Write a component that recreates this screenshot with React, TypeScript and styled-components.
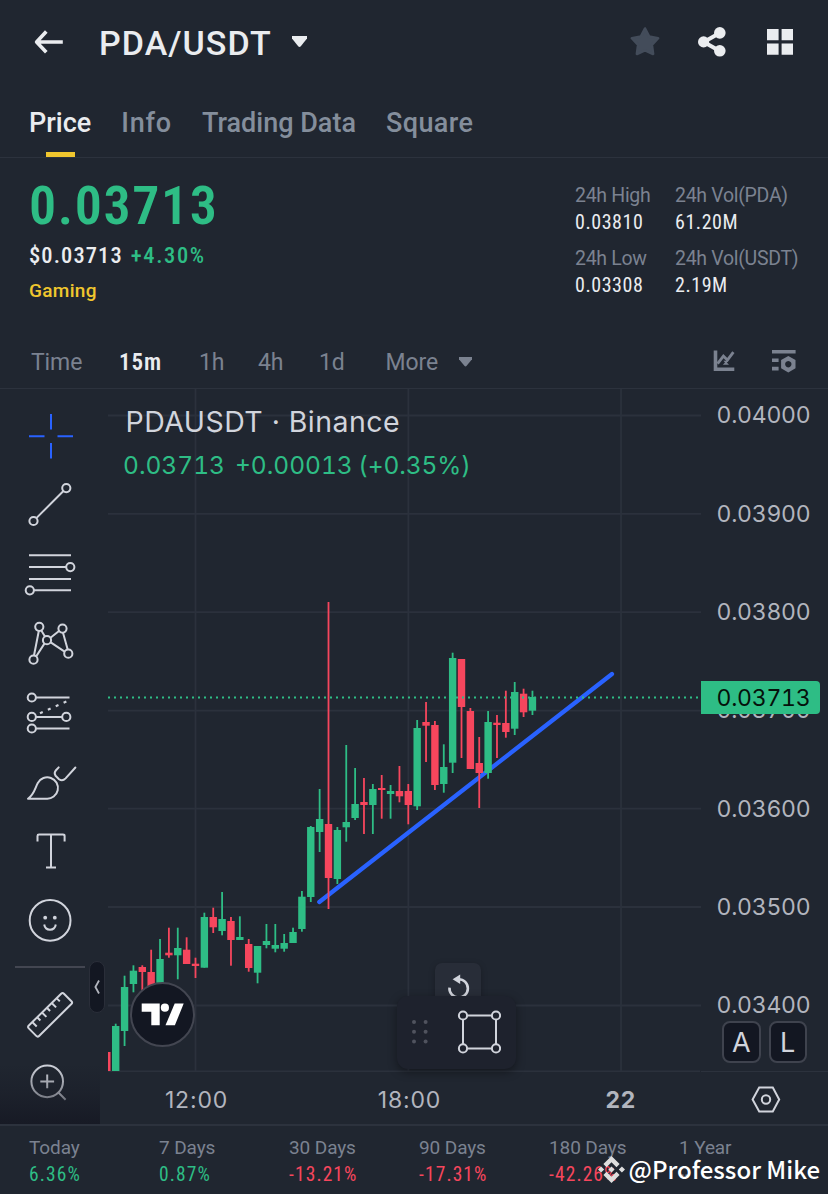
import React from 'react';
import styled, { createGlobalStyle, css } from 'styled-components';

const C = {
  bg: '#202630',
  line: '#2c323d',
  grid: '#2b313c',
  text: '#eaecef',
  muted: '#848e9c',
  dim: '#7b8290',
  axis: '#b2b5be',
  icon: '#d1d4dc',
  up: '#2ebd85',
  down: '#f6465d',
  blue: '#2962ff',
  yellow: '#f0c62e',
  panel: '#131722',
};

const Global = createGlobalStyle`
  * { box-sizing: border-box; }
  body { margin: 0; background: ${C.bg}; }
  svg { display: block; flex: none; }
`;

const Screen = styled.main`
  position: relative;
  width: 828px;
  height: 1194px;
  overflow: hidden;
  display: flex;
  flex-direction: column;
  background: ${C.bg};
  color: ${C.text};
  font-family: Roboto, 'Liberation Sans', sans-serif;
  white-space: nowrap;
`;

/* ---------- header ---------- */

const Header = styled.header`
  height: 87px;
  display: flex;
  align-items: center;
  padding: 0 34px 2px 33px;
  > svg {
    margin-bottom: 1.5px;
  }
`;

const PairTitle = styled.h1`
  margin: 0 20px 0 35px;
  font-size: 34px;
  line-height: 40px;
  font-weight: 500;
  letter-spacing: 1.05px;
`;

const HeaderActions = styled.div`
  display: flex;
  align-items: center;
  gap: 37px;
  margin: 0 0 1.5px auto;
  > :last-child {
    margin-left: 2px;
  }
`;

/* ---------- tabs ---------- */

const Tabs = styled.nav`
  height: 71px;
  display: flex;
  gap: 30px;
  padding-left: 29px;
  border-bottom: 1px solid ${C.line};
`;

const Tab = styled.span<{ $active?: boolean; $spacing?: number }>`
  position: relative;
  font-size: 27px;
  line-height: 72px;
  font-weight: 500;
  letter-spacing: ${(p) => p.$spacing ?? 0}px;
  color: ${(p) => (p.$active ? C.text : C.muted)};
  ${(p) =>
    p.$active &&
    css`
      &::after {
        content: '';
        position: absolute;
        left: 16.5px;
        bottom: 0;
        width: 29px;
        height: 5px;
        background: ${C.yellow};
      }
    `}
`;

/* ---------- price summary ---------- */

const Summary = styled.section`
  height: 178px;
  display: flex;
  justify-content: space-between;
  padding: 18px 0 0 29px;
`;

const PriceColumn = styled.div`
  display: flex;
  flex-direction: column;
`;

const LastPrice = styled.div`
  font-size: 54px;
  line-height: 59px;
  font-weight: 600;
  font-stretch: 75%;
  letter-spacing: 1.6px;
  color: ${C.up};
`;

const PriceSub = styled.div`
  display: flex;
  gap: 8px;
  margin-top: 5px;
  font-size: 22.5px;
  line-height: 30px;
  font-weight: 500;
  font-stretch: 75%;
  letter-spacing: 1.1px;
`;

const Gain = styled.span`
  letter-spacing: 1.6px;
  color: ${C.up};
`;

const Category = styled.div`
  margin-top: 8px;
  font-size: 19px;
  line-height: 26px;
  font-weight: 500;
  letter-spacing: 0.3px;
  color: ${C.yellow};
`;

const DayStats = styled.dl`
  width: 253px;
  margin: 5.6px 0 0;
  display: grid;
  grid-template-columns: 100px 1fr;
  align-content: start;
  row-gap: 9.4px;
  line-height: 27px;
`;

const DayStat = styled.div``;

const DayLabel = styled.dt`
  font-size: 19.5px;
  letter-spacing: -0.3px;
  color: ${C.dim};
`;

const DayValue = styled.dd`
  margin: 0;
  font-size: 20px;
  font-stretch: 75%;
  letter-spacing: 0.55px;
  color: ${C.text};
`;

/* ---------- interval bar ---------- */

const Intervals = styled.nav`
  height: 53px;
  display: flex;
  align-items: center;
  justify-content: space-between;
  padding: 0 31px 0 31px;
  border-bottom: 1px solid ${C.line};
`;

const IntervalList = styled.div`
  display: grid;
  grid-template-columns: 88px 80px 59px 61px 66.5px 73.5px auto;
  align-items: center;
`;

const Interval = styled.span<{ $active?: boolean }>`
  padding-top: 1px;
  font-size: 23px;
  line-height: 52px;
  letter-spacing: ${(p) => (p.$active ? 0.9 : -0.1)}px;
  font-weight: ${(p) => (p.$active ? 600 : 400)};
  font-stretch: ${(p) => (p.$active ? 75 : 100)}%;
  color: ${(p) => (p.$active ? C.text : C.dim)};
`;

const IntervalTools = styled.div`
  display: flex;
  align-items: center;
  gap: 36px;
  padding-bottom: 2px;
`;

/* ---------- chart ---------- */

const ChartArea = styled.section`
  height: 737px;
  display: grid;
  grid-template: 683px 52px / 100px 601px 127px;
  border-bottom: 2px solid ${C.line};
`;

const DrawingTools = styled.aside`
  position: relative;
  grid-row: 1 / 3;
  display: flex;
  flex-direction: column;
  align-items: center;
  padding-top: 12.5px;
  &::after {
    content: '';
    position: absolute;
    inset: auto 0 0 0;
    height: 60px;
    background: linear-gradient(rgba(23, 26, 37, 0), rgba(23, 26, 37, 0.4) 50%, #171a25);
  }
`;

const Tool = styled.div`
  height: 69.1px;
  display: flex;
  align-items: center;
`;

const ToolDivider = styled.hr`
  width: 70px;
  height: 2px;
  margin: 12px 0;
  border: 0;
  background: #434651;
`;

const CollapseHandle = styled.div`
  position: absolute;
  left: 89px;
  top: 572px;
  z-index: 2;
  width: 16px;
  height: 52px;
  display: grid;
  place-items: center;
  border: 1.5px solid #2a2e39;
  border-radius: 8px;
  background: ${C.panel};
`;

const Plot = styled.div`
  position: relative;
`;

const Legend = styled.div`
  position: absolute;
  left: 23px;
  top: 14px;
  font-family: Inter, sans-serif;
`;

const LegendTitle = styled.div`
  padding-left: 2.5px;
  font-size: 28.5px;
  line-height: 38px;
  letter-spacing: 0.45px;
  color: ${C.icon};
`;

const LegendValues = styled.div`
  display: flex;
  gap: 10px;
  margin-top: 5px;
  font-size: 24.5px;
  line-height: 38px;
  font-variant-numeric: tabular-nums;
  color: ${C.up};
  > :last-child {
    margin-left: -4.5px;
    letter-spacing: -0.1px;
  }
`;

const Badge = styled.div`
  position: absolute;
  left: 30px;
  top: 593px;
  width: 65px;
  height: 65px;
  display: grid;
  place-items: center;
  border: 2px solid #434651;
  border-radius: 50%;
  background: ${C.panel};
`;

const ResetButton = styled.div`
  position: absolute;
  left: 335px;
  top: 574px;
  width: 46px;
  height: 46px;
  padding: 10px 0 0 11px;
  border-radius: 7px;
  background: #282d38;
  box-shadow: 0 2px 6px rgba(0, 0, 0, 0.25);
`;

const FloatingBar = styled.div`
  position: absolute;
  left: 296.5px;
  top: 606.5px;
  width: 119.5px;
  height: 73.5px;
  display: flex;
  align-items: center;
  gap: 28px;
  padding-left: 14px;
  border-radius: 11px;
  background: #1e222d;
  box-shadow: 0 3px 10px rgba(0, 0, 0, 0.4);
`;

const PriceAxis = styled.div`
  position: relative;
  display: flex;
  flex-direction: column;
  gap: 71.35px;
  padding: 13.4px 0 0 15.5px;
  font-family: Inter, sans-serif;
  font-size: 23px;
  line-height: 27px;
  letter-spacing: -0.25px;
  font-variant-numeric: tabular-nums;
  color: ${C.axis};
  border-bottom: 1px solid ${C.line};
`;

const PriceTag = styled.div`
  position: absolute;
  left: 0;
  top: 292px;
  width: 119px;
  height: 33px;
  padding-left: 15.5px;
  border-radius: 0 4px 4px 0;
  line-height: 34px;
  background: ${C.up};
  color: #05110b;
`;

const ScaleButtons = styled.div`
  position: absolute;
  left: 21px;
  top: 631.5px;
  display: flex;
  gap: 8px;
`;

const ScaleButton = styled.span`
  width: 38.5px;
  height: 42.5px;
  border: 2px solid #3f434e;
  border-radius: 8px;
  background: ${C.panel};
  font-size: 27px;
  line-height: 39px;
  letter-spacing: 0;
  text-align: center;
  color: ${C.icon};
`;

const TimeAxis = styled.div`
  display: grid;
  grid-template-columns: 191px 235px 1fr;
  font-family: Inter, sans-serif;
  font-size: 23px;
  line-height: 56px;
  letter-spacing: 0.8px;
  color: ${C.axis};
`;

const TimeLabel = styled.span<{ $strong?: boolean }>`
  text-align: right;
  padding-right: ${(p) => (p.$strong ? 65 : 0)}px;
  font-weight: ${(p) => (p.$strong ? 700 : 400)};
  &:first-child {
    padding-right: 63px;
  }
  &:nth-child(2) {
    padding-right: 85px;
  }
`;

const AxisSettings = styled.div`
  display: grid;
  align-items: center;
  padding: 1px 0 0 50px;
`;

/* ---------- performance ---------- */

const Performance = styled.footer`
  flex: 1;
  display: grid;
  grid-template-columns: repeat(6, 130px);
  align-content: start;
  padding: 9px 0 0 29px;
  font-size: 19px;
  line-height: 26.5px;
`;

const Period = styled.div``;

const PeriodLabel = styled.div`
  letter-spacing: -0.1px;
  color: ${C.dim};
`;

const PeriodValue = styled.div<{ $tone: string }>`
  padding-top: 0.5px;
  font-size: 19.5px;
  font-stretch: 75%;
  letter-spacing: 1.1px;
  color: ${(p) => p.$tone};
`;

const Watermark = styled.div`
  position: absolute;
  right: 8px;
  top: 1152px;
  display: flex;
  align-items: center;
  gap: 4px;
  font-family: 'Noto Sans CJK SC', sans-serif;
  font-size: 24px;
  font-weight: 500;
  line-height: 34px;
  color: #fff;
`;

/* ---------- candles ---------- */

type Candle = [dir: 'u' | 'd', high: number, low: number, top: number, bottom: number];

const CANDLES: Candle[] = [
  ['d', 1052, 1071, 1052, 1071],
  ['u', 1023.7, 1071, 1026, 1071],
  ['u', 975.7, 1046, 987, 1031],
  ['u', 965.3, 992.3, 970.7, 984],
  ['d', 965.3, 992, 967, 972],
  ['d', 949.7, 990, 972, 990],
  ['u', 939, 990, 959, 988],
  ['d', 927.7, 957.7, 952.7, 955.3],
  ['u', 927.7, 979.3, 948, 955.3],
  ['d', 937.3, 964, 949.7, 964],
  ['d', 957.7, 978, 963.7, 966],
  ['u', 912.7, 967.7, 917, 967.7],
  ['d', 907.7, 933, 917, 927.3],
  ['u', 892, 935.3, 919, 931],
  ['d', 917, 965.7, 921, 940],
  ['u', 916.3, 940, 937, 940],
  ['d', 939, 971.7, 944, 968],
  ['u', 946, 983.3, 946, 972.7],
  ['u', 924, 948.3, 941, 945],
  ['u', 924, 952.3, 945, 948.7],
  ['u', 934, 951.7, 943, 948.7],
  ['u', 927.7, 943, 932, 943],
  ['u', 891, 931.7, 896.7, 929],
  ['u', 826, 902, 827, 897],
  ['u', 789, 852, 819, 832],
  ['d', 602, 909, 824, 878],
  ['u', 827, 884, 830, 879],
  ['u', 745, 841.7, 822, 827.3],
  ['u', 768, 820, 804, 818],
  ['d', 778, 834, 802, 805],
  ['u', 784, 834, 789, 805],
  ['d', 775, 818.7, 788, 790],
  ['u', 785, 818.7, 791, 794],
  ['d', 766, 802.3, 791, 796.3],
  ['d', 784, 824.3, 791, 805],
  ['u', 720, 810, 728, 806.3],
  ['d', 702, 762, 722, 725.7],
  ['d', 721, 790, 725, 785],
  ['u', 744.3, 792.7, 767, 784],
  ['u', 652.7, 773, 658, 762.7],
  ['d', 659, 758, 659, 707],
  ['d', 708, 769, 711, 769],
  ['d', 737, 808, 763, 773],
  ['u', 711, 778.7, 722, 773],
  ['d', 715, 758, 722.7, 725],
  ['d', 690.7, 737.7, 723, 732],
  ['u', 682, 735, 692, 728.7],
  ['d', 688.7, 717, 693.7, 712.3],
  ['u', 690.7, 715, 697, 710.7],
];

const STEP = 8.867;
const FIRST_X = 106.83;
const GRID_Y = [415.5, 513.9, 612.2, 710.6, 808.7, 907, 1005.5];
const GRID_X = [195.5, 408.4, 621];

function PriceChart() {
  return (
    <svg width="601" height="683" viewBox="100 389 601 683">
      <defs>
        <clipPath id="plot">
          <rect x="108" y="389" width="593" height="682" />
        </clipPath>
      </defs>
      <g stroke={C.grid} strokeWidth="1.8">
        {GRID_Y.map((y) => <path key={y} d={`M108 ${y}H701`} />)}
        {GRID_X.map((x) => <path key={x} d={`M${x} 389V1071`} />)}
        <path d="M108 1071.3H700" />
      </g>
      <path d="M319.3 902L612 674" stroke={C.blue} strokeWidth="4.3" strokeLinecap="round" />
      <g clipPath="url(#plot)">
        {CANDLES.map(([dir, high, low, top, bottom], i) => {
          const x = FIRST_X + i * STEP;
          const color = dir === 'u' ? C.up : C.down;
          return (
            <g key={i} fill={color}>
              <rect x={x - 0.9} y={high} width="1.8" height={low - high} />
              <rect x={x - 3.7} y={top} width="7.4" height={bottom - top} />
            </g>
          );
        })}
      </g>
      <path d="M108 697.4H701" stroke={C.up} strokeWidth="2" strokeDasharray="2 4" />
    </svg>
  );
}

/* ---------- drawing tool icons ---------- */

const Glyph = ({ cy, children, color = C.icon }: { cy: number; children: React.ReactNode; color?: string }) => (
  <svg width="64" height="64" viewBox={`18 ${cy - 32} 64 64`} fill="none" stroke={color} strokeWidth="2">
    {children}
  </svg>
);

const CrossIcon = () => (
  <Glyph cy={436} color={C.blue}>
    <path d="M51 414v15.5M51 443v15.5M29 436.3h15.5M57.5 436.3H73" />
  </Glyph>
);
const TrendIcon = () => (
  <Glyph cy={505}>
    <path d="M36.6 517.9L63.2 491.2" />
    <circle cx="33.5" cy="521" r="4.1" />
    <circle cx="66.3" cy="488.1" r="4.1" />
  </Glyph>
);
const FibIcon = () => (
  <Glyph cy={574}>
    <path d="M29 555.3h42M29 567.1h37M29 578.9h42M34 590.3h37" />
    <circle cx="70.3" cy="567.1" r="4.1" />
    <circle cx="29.8" cy="590.3" r="4.1" />
  </Glyph>
);
const PatternIcon = () => (
  <Glyph cy={643}>
    <path d="M38.8 631L34 655.5M41.3 630.5L45 636.5M36.3 656.3L44.4 643.6M50.5 637.8L59 631M50.7 642.3L64.6 651.6M63 632.8L67.7 649.4" />
    <circle cx="39.3" cy="626.8" r="4.1" />
    <circle cx="62.5" cy="628.6" r="4.1" />
    <circle cx="47" cy="640.2" r="4.1" />
    <circle cx="33.5" cy="659.7" r="4.1" />
    <circle cx="68.3" cy="653.7" r="4.1" />
  </Glyph>
);
const ForecastIcon = () => (
  <Glyph cy={712.5}>
    <path d="M36 698h33.5M36 717.4h26M36 729h33.5" />
    <path d="M40 713.7L67 701.8" strokeDasharray="3 5.6" strokeWidth="2.2" />
    <circle cx="31.8" cy="698" r="4.1" />
    <circle cx="31.8" cy="717.4" r="4.1" />
    <circle cx="66.3" cy="717.4" r="4.1" />
    <circle cx="31.8" cy="729" r="4.1" />
  </Glyph>
);
const BrushIcon = () => (
  <Glyph cy={782}>
    <path d="M28 798.7C34.5 794 35 788 37.8 783A10.7 10.7 0 1 1 46.5 798.7Z" strokeLinejoin="round" />
    <path d="M58.7 767.4L56 770.2Q53.6 773 55.6 775.8L59 779.2Q62.5 781.6 65.6 778.4L75.4 767.5" strokeLinecap="round" />
  </Glyph>
);
const TextIcon = () => (
  <Glyph cy={851}>
    <path d="M37.5 841.5V836Q37.5 834.6 39 834.6H63Q64.6 834.6 64.6 836V841.5M51 834.6V867.3M46 867.5H56" />
  </Glyph>
);
const SmileIcon = () => (
  <Glyph cy={920}>
    <circle cx="50.1" cy="920.4" r="20.4" />
    <path d="M44.2 924.5C45.4 931.4 54.6 931.4 55.8 924.5" />
    <circle cx="45.2" cy="917.7" r="1.9" fill={C.icon} stroke="none" />
    <circle cx="54.8" cy="917.7" r="1.9" fill={C.icon} stroke="none" />
  </Glyph>
);
const RulerIcon = () => (
  <Glyph cy={1015}>
    <rect x="25.4" y="1007.5" width="49.4" height="14.6" rx="2" transform="rotate(-44.6 50.1 1014.8)" />
    <path d="M32.5 1022.3l4.2 4.2M37.4 1017.5l3 3M42.2 1012.7l4.2 4.2M47.1 1008l3 3M51.9 1003.2l4.2 4.2M56.8 998.4l3 3" />
  </Glyph>
);
const ZoomIcon = () => (
  <Glyph cy={1084}>
    <circle cx="47.2" cy="1081.4" r="15.8" />
    <path d="M40.3 1081.4h13.8M47.2 1074.5v13.8M58.4 1092.5l7.2 7.2" />
  </Glyph>
);

/* ---------- other icons ---------- */

const BackIcon = () => (
  <svg width="31" height="24" viewBox="33 30 31 24" fill="none" stroke={C.text} strokeWidth="3.6">
    <path d="M62.8 42H37M46.3 31.6L36.6 42L46.3 52.3" strokeLinejoin="round" />
  </svg>
);
const CaretIcon = ({ width, color }: { width: number; color: string }) => (
  <svg width={width} height={(width * 11) / 15} viewBox="0 0 15 11" fill={color}>
    <path d="M0 0H15V2.6L8.8 10.2Q7.5 11.6 6.2 10.2L0 2.6Z" />
  </svg>
);
const StarIcon = () => (
  <svg width="30" height="30" viewBox="630 28 30 30" fill="#434c5a" stroke="#434c5a" strokeWidth="2.6" strokeLinejoin="round">
    <path d="M645 29.5L649.2 37.6L658.1 39.2L651.9 45.8L653.1 55L645 51.2L636.9 55L638.1 45.8L631.9 39.2L640.8 37.6Z" />
  </svg>
);
const ShareIcon = () => (
  <svg width="30" height="30" viewBox="697 27.5 30 30" fill={C.text}>
    <path d="M719.7 33.6L703.8 42.4L719.7 51.4" fill="none" stroke={C.text} strokeWidth="4" />
    <circle cx="703.6" cy="42.4" r="5.6" />
    <circle cx="719.8" cy="33.4" r="5.8" />
    <circle cx="719.8" cy="51.3" r="5.8" />
  </svg>
);
const GridIcon = () => (
  <svg width="28" height="28" viewBox="766 28.5 28 28" fill={C.text}>
    <path d="M767 29.4h11.6v11.4H767zM781.6 29.4h11.4v11.4h-11.4zM767 44h11.6v11.2H767zM781.6 44h11.4v11.2h-11.4z" />
  </svg>
);
const LineChartIcon = () => (
  <svg width="22" height="22" viewBox="713 349.5 22 22" fill={C.dim}>
    <path d="M713.7 350v20.6h20.6v-3.6h-17V350z" />
    <path d="M717.6 363.2L723.4 355.6L727.4 359.6L733.4 351.6" fill="none" stroke={C.dim} strokeWidth="2.8" />
    <path d="M723.4 360.2h5l-1.6 1.9 2.2 2.2h-6.2l2.2-2.2z" />
  </svg>
);
const IndicatorIcon = () => (
  <svg width="26" height="24" viewBox="771 349 26 24" fill={C.dim}>
    <path d="M772 350h23.6v3.6H772zM772 358.4h6.6v3.6H772zM772 366.8h6.6v3.6H772z" />
    <path fillRule="evenodd" d="M788.3 356l7.2 4.1v8.2l-7.2 4.1-7.2-4.1v-8.2zM788.3 361a3.2 3.2 0 1 0 .01 0z" />
  </svg>
);
const HandleIcon = () => (
  <svg width="8" height="16" viewBox="0 0 8 16" fill="none" stroke={C.axis} strokeWidth="1.8">
    <path d="M6 1.5L2.4 8L6 14.5" />
  </svg>
);
const ViewMark = () => (
  <svg width="43" height="23" viewBox="141.5 1004.6 43 23" fill="#fff">
    <path d="M142.2 1005.2h18v21.6h-8.4v-13.4h-9.6z" />
    <circle cx="165.4" cy="1009.3" r="4.1" />
    <path d="M175.2 1005.2h9l-8.8 21.6h-9.4z" />
  </svg>
);
const ResetIcon = () => (
  <svg width="26" height="30" viewBox="446 973 26 30">
    <path d="M449.5 987.6A9.2 9.2 0 1 0 458.6 979.2" fill="none" stroke={C.icon} strokeWidth="2.6" />
    <path d="M452.6 979.3L460.2 974.4V984Z" fill={C.icon} />
  </svg>
);
const DragIcon = () => (
  <svg width="18" height="26" viewBox="411 1019.5 18 26" fill="#50535e">
    {[1022.5, 1032.2, 1042].map((y) => (
      <g key={y}>
        <circle cx="414" cy={y} r="2" />
        <circle cx="425.6" cy={y} r="2" />
      </g>
    ))}
  </svg>
);
const BoxIcon = () => (
  <svg width="44" height="44" viewBox="457 1010.3 44 44" fill="none" stroke={C.icon} strokeWidth="2">
    <path d="M467.5 1015.8h24M467.5 1048.7h24M463 1020.3v24M496 1020.3v24" />
    <circle cx="463" cy="1015.8" r="4.1" />
    <circle cx="496" cy="1015.8" r="4.1" />
    <circle cx="463" cy="1048.7" r="4.1" />
    <circle cx="496" cy="1048.7" r="4.1" />
  </svg>
);
const HexIcon = () => (
  <svg width="30" height="28" viewBox="750.4 1084.5 30 28" fill="none" stroke={C.icon} strokeWidth="2">
    <path d="M758.6 1087h13.6l6.4 12-6.4 12h-13.6l-6.6-12z" />
    <circle cx="765.4" cy="1099" r="4.2" />
  </svg>
);
const DiamondLogo = () => (
  <svg width="27" height="27" viewBox="0 0 27 27" fill="#dedede">
    <path d="M13.5 0L21.6 8.1L18.5 11.2L13.5 6.2L8.5 11.2L5.4 8.1ZM13.5 27L5.4 18.9L8.5 15.8L13.5 20.8L18.5 15.8L21.6 18.9ZM0 13.5L3.1 10.4L6.2 13.5L3.1 16.6ZM20.8 13.5L23.9 10.4L27 13.5L23.9 16.6ZM10.4 13.5L13.5 10.4L16.6 13.5L13.5 16.6Z" />
  </svg>
);

/* ---------- data ---------- */

const DAY_STATS = [
  ['24h High', '0.03810'],
  ['24h Vol(PDA)', '61.20M'],
  ['24h Low', '0.03308'],
  ['24h Vol(USDT)', '2.19M'],
];
const PRICES = ['0.04000', '0.03900', '0.03800', '0.03700', '0.03600', '0.03500', '0.03400'];
const PERIODS = [
  ['Today', '6.36%', C.up],
  ['7 Days', '0.87%', C.up],
  ['30 Days', '-13.21%', C.down],
  ['90 Days', '-17.31%', C.down],
  ['180 Days', '-42.26%', C.down],
  ['1 Year', '--', C.dim],
];
const TOOLS = [CrossIcon, TrendIcon, FibIcon, PatternIcon, ForecastIcon, BrushIcon, TextIcon, SmileIcon];

export default function App() {
  return (
    <Screen>
      <Global />
      <Header>
        <BackIcon />
        <PairTitle>PDA/USDT</PairTitle>
        <CaretIcon width={15} color={C.text} />
        <HeaderActions>
          <StarIcon />
          <ShareIcon />
          <GridIcon />
        </HeaderActions>
      </Header>

      <Tabs>
        <Tab $active>Price</Tab>
        <Tab $spacing={0.8}>Info</Tab>
        <Tab>Trading Data</Tab>
        <Tab $spacing={0.4}>Square</Tab>
      </Tabs>

      <Summary>
        <PriceColumn>
          <LastPrice>0.03713</LastPrice>
          <PriceSub>
            <span>$0.03713</span>
            <Gain>+4.30%</Gain>
          </PriceSub>
          <Category>Gaming</Category>
        </PriceColumn>
        <DayStats>
          {DAY_STATS.map(([label, value]) => (
            <DayStat key={label}>
              <DayLabel>{label}</DayLabel>
              <DayValue>{value}</DayValue>
            </DayStat>
          ))}
        </DayStats>
      </Summary>

      <Intervals>
        <IntervalList>
          <Interval>Time</Interval>
          <Interval $active>15m</Interval>
          <Interval>1h</Interval>
          <Interval>4h</Interval>
          <Interval>1d</Interval>
          <Interval>More</Interval>
          <CaretIcon width={13} color={C.dim} />
        </IntervalList>
        <IntervalTools>
          <LineChartIcon />
          <IndicatorIcon />
        </IntervalTools>
      </Intervals>

      <ChartArea>
        <DrawingTools>
          {TOOLS.map((Icon, i) => (
            <Tool key={i}>
              <Icon />
            </Tool>
          ))}
          <ToolDivider />
          <Tool>
            <RulerIcon />
          </Tool>
          <Tool>
            <ZoomIcon />
          </Tool>
          <CollapseHandle>
            <HandleIcon />
          </CollapseHandle>
        </DrawingTools>

        <Plot>
          <PriceChart />
          <Legend>
            <LegendTitle>PDAUSDT · Binance</LegendTitle>
            <LegendValues>
              <span>0.03713</span>
              <span>+0.00013</span>
              <span>(+0.35%)</span>
            </LegendValues>
          </Legend>
          <Badge>
            <ViewMark />
          </Badge>
          <ResetButton>
            <ResetIcon />
          </ResetButton>
          <FloatingBar>
            <DragIcon />
            <BoxIcon />
          </FloatingBar>
        </Plot>

        <PriceAxis>
          {PRICES.map((price) => (
            <span key={price}>{price}</span>
          ))}
          <PriceTag>0.03713</PriceTag>
          <ScaleButtons>
            <ScaleButton>A</ScaleButton>
            <ScaleButton>L</ScaleButton>
          </ScaleButtons>
        </PriceAxis>

        <TimeAxis>
          <TimeLabel>12:00</TimeLabel>
          <TimeLabel>18:00</TimeLabel>
          <TimeLabel $strong>22</TimeLabel>
        </TimeAxis>
        <AxisSettings>
          <HexIcon />
        </AxisSettings>
      </ChartArea>

      <Performance>
        {PERIODS.map(([label, value, tone]) => (
          <Period key={label}>
            <PeriodLabel>{label}</PeriodLabel>
            <PeriodValue $tone={tone}>{value}</PeriodValue>
          </Period>
        ))}
      </Performance>

      <Watermark>
        <DiamondLogo />
        @Professor Mike
      </Watermark>
    </Screen>
  );
}
